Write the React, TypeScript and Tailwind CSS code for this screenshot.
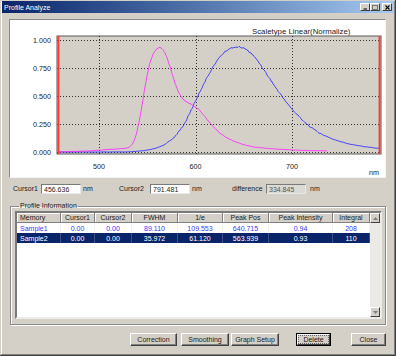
import React from 'react';

type Pt = [number, number];

// spectra, [nm, normalized value]
const pinkPts: Pt[] = [
  [457, 0.0], [490, 0.01], [510, 0.022], [525, 0.03], [532, 0.04], [537, 0.1], [542, 0.28],
  [547, 0.55], [552, 0.78], [557, 0.9], [562, 0.935], [566, 0.925], [570, 0.86], [575, 0.72],
  [580, 0.58], [585, 0.49], [590, 0.45], [595, 0.43], [600, 0.4], [605, 0.37], [611, 0.3],
  [618, 0.23], [625, 0.17], [632, 0.13], [640, 0.095], [650, 0.065], [660, 0.045], [680, 0.028],
  [700, 0.018], [720, 0.012], [737, 0.01],
];

const bluePts: Pt[] = [
  [457, 0.0], [530, 0.0], [545, 0.01], [558, 0.03], [568, 0.065], [578, 0.13], [588, 0.24],
  [598, 0.42], [608, 0.6], [618, 0.76], [626, 0.86], [634, 0.92], [642, 0.94], [650, 0.93],
  [658, 0.88], [665, 0.81], [675, 0.68], [685, 0.55], [700, 0.38], [715, 0.25], [730, 0.16],
  [745, 0.105], [760, 0.07], [775, 0.048], [791, 0.032],
];

const xOf = (nm: number) => 99 + (nm - 500) * 0.965;
const yOf = (v: number) => 152 - 112 * v;

function curvePath(pts: Pt[], noise: number, seed: number) {
  const x0 = Math.ceil(xOf(pts[0][0]));
  const x1 = Math.floor(xOf(pts[pts.length - 1][0]));
  const vals: number[] = [];
  for (let x = x0; x <= x1; x++) {
    const nm = 500 + (x - 99) / 0.965;
    let k = 0;
    while (k < pts.length - 2 && pts[k + 1][0] < nm) k++;
    const [a, va] = pts[k];
    const [b, vb] = pts[k + 1];
    const t = Math.min(1, Math.max(0, (nm - a) / (b - a)));
    vals.push(va + (vb - va) * t);
  }
  const sm = vals.map((_, i) => {
    let s = 0, n = 0;
    for (let j = i - 2; j <= i + 2; j++) {
      if (j >= 0 && j < vals.length) { s += vals[j]; n++; }
    }
    return s / n;
  });
  return sm
    .map((v, i) => {
      const r = Math.sin((i + seed) * 12.9898) * 43758.5453;
      const f = r - Math.floor(r) - 0.5;
      const y = yOf(v) + f * noise * Math.min(1, v * 3 + 0.2);
      return `${i === 0 ? 'M' : 'L'}${x0 + i},${y.toFixed(2)}`;
    })
    .join(' ');
}

const yTicks = [
  { v: 1, label: '1.000' },
  { v: 0.75, label: '0.750' },
  { v: 0.5, label: '0.500' },
  { v: 0.25, label: '0.250' },
  { v: 0, label: '0.000' },
];

const xTicks = [500, 600, 700];

function Chart() {
  const left = 57;
  const right = 381;
  const top = 36;
  const bottom = 154;
  return (
    <svg width={375} height={157} className="block">
      <g transform="translate(-10,-20)" fontFamily="'Liberation Sans', Arial, sans-serif" fontSize="7.2">
        <text x={252} y={34} fontSize="7.8" fill="#222">Scaletype Linear(Normalize)</text>
        <rect x={left} y={top} width={right - left} height={bottom - top} fill="#d4d0c8" stroke="#5a5a5a" strokeWidth={1} />
        {yTicks.map(t => (
          <g key={t.label}>
            <line x1={left} x2={right} y1={yOf(t.v) + 0.5} y2={yOf(t.v) + 0.5} stroke="#333" strokeWidth={1} strokeDasharray="1 2" />
            <text x={51} y={yOf(t.v) + 3} textAnchor="end" fill="#222">{t.label}</text>
          </g>
        ))}
        {xTicks.map(t => (
          <g key={t}>
            <line x1={Math.round(xOf(t)) + 0.5} x2={Math.round(xOf(t)) + 0.5} y1={top} y2={bottom} stroke="#333" strokeWidth={1} strokeDasharray="1 2" />
            <text x={xOf(t)} y={169} textAnchor="middle" fill="#222">{t}</text>
          </g>
        ))}
        <text x={369} y={175} fill="#222">nm</text>
        <path d={curvePath(bluePts, 1.4, 3)} fill="none" stroke="#3030ff" strokeWidth={0.85} />
        <path d={curvePath(pinkPts, 0.9, 11)} fill="none" stroke="#ff2aff" strokeWidth={0.85} />
        <line x1={58.5} x2={58.5} y1={top} y2={bottom} stroke="#ff3b30" strokeWidth={1.8} />
        <line x1={379.5} x2={379.5} y1={top} y2={bottom} stroke="#ff3b30" strokeWidth={1.8} />
      </g>
    </svg>
  );
}

const columns = [
  { label: 'Memory', w: 'w-[44px]' },
  { label: 'Cursor1', w: 'w-[34px]' },
  { label: 'Cursor2', w: 'w-[37px]' },
  { label: 'FWHM', w: 'w-[46px]' },
  { label: '1/e', w: 'w-[45px]' },
  { label: 'Peak Pos', w: 'w-[46px]' },
  { label: 'Peak Intensity', w: 'w-[64px]' },
  { label: 'Integral', w: 'w-[37px]' },
];

const rows = [
  { memory: 'Sample1', values: ['0.00', '0.00', '89.110', '109.553', '640.715', '0.94', '208'], selected: false },
  { memory: 'Sample2', values: ['0.00', '0.00', '35.972', '61.120', '563.939', '0.93', '110'], selected: true },
];

function WinButton({ label, isDefault, className }: { label: string; isDefault?: boolean; className: string }) {
  if (isDefault) {
    return (
      <div className={`${className} h-[13px] border border-black`}>
        <div className="h-full border border-t-white border-l-white border-b-[#404040] border-r-[#404040] bg-[#d4d0c8] flex items-center justify-center">
          <div className="w-[29px] h-[7px] outline outline-1 outline-dotted outline-[#666] flex items-center justify-center leading-none">{label}</div>
        </div>
      </div>
    );
  }
  return (
    <div className={`${className} h-[13px] border border-t-white border-l-white border-b-[#404040] border-r-[#404040] bg-[#d4d0c8] shadow-[inset_-1px_-1px_#808080] flex items-center justify-center leading-none`}>
      {label}
    </div>
  );
}

function TitleButton({ children, className = '' }: { children: React.ReactNode; className?: string }) {
  return (
    <div className={`w-[10px] h-[8px] bg-[#d4d0c8] border border-t-white border-l-white border-b-[#404040] border-r-[#404040] flex items-center justify-center ${className}`}>
      {children}
    </div>
  );
}

function TextBox({ value, disabled, className }: { value: string; disabled?: boolean; className: string }) {
  return (
    <div className={`${className} h-[10px] border border-t-[#7a7a7a] border-l-[#7a7a7a] border-b-[#e8e8e8] border-r-[#e8e8e8] ${disabled ? 'bg-[#dcdad5] text-[#555]' : 'bg-white text-[#222]'} flex items-center pl-[2px] leading-none`}>
      {value}
    </div>
  );
}

export default function App() {
  return (
    <div className="w-[396px] h-[356px] bg-[#d4d0c8] font-['Liberation_Sans',Arial,sans-serif] text-[7px] text-[#1a1a1a] overflow-hidden shadow-[inset_-1px_-1px_#404040,inset_1px_1px_#d4d0c8,inset_-2px_-2px_#808080,inset_2px_2px_#ffffff] pt-[1px] px-[2px] flex flex-col">
      {/* title bar */}
      <div className="h-[12px] bg-gradient-to-r from-[#0a246a] to-[#a6caf0] flex items-center pl-[2px] pr-[2px]">
        <span className="text-white text-[7px] leading-none">Profile Analyze</span>
        <div className="ml-auto flex items-center">
          <TitleButton>
            <svg width="5" height="5" viewBox="0 0 5 5"><rect x="0.5" y="3.5" width="3.5" height="1" fill="#000" /></svg>
          </TitleButton>
          <TitleButton>
            <svg width="6" height="5" viewBox="0 0 6 5"><rect x="0.5" y="0.5" width="5" height="4" fill="none" stroke="#777" strokeWidth="1" /></svg>
          </TitleButton>
          <TitleButton className="ml-[2px]">
            <svg width="5" height="5" viewBox="0 0 5 5"><path d="M0.5 0.5 L4.5 4.5 M4.5 0.5 L0.5 4.5" stroke="#000" strokeWidth="1.1" /></svg>
          </TitleButton>
        </div>
      </div>

      {/* chart panel */}
      <div className="ml-[7px] mt-[6px] w-[377px] h-[159px] bg-white border border-t-[#8a8a8a] border-l-[#8a8a8a] border-b-[#f4f4f4] border-r-[#f4f4f4]">
        <Chart />
      </div>

      {/* cursor row */}
      <div className="mt-[6px] h-[10px] flex items-center">
        <span className="ml-[11px] w-[28px]">Cursor1</span>
        <TextBox value="456.636" className="w-[40px]" />
        <span className="ml-[2px] w-[36px]">nm</span>
        <span className="w-[31px]">Cursor2</span>
        <TextBox value="791.481" className="w-[40px]" />
        <span className="ml-[2px] w-[40px]">nm</span>
        <span className="w-[34px]">difference</span>
        <TextBox value="334.845" disabled className="w-[40px]" />
        <span className="ml-[4px]">nm</span>
      </div>

      {/* profile information */}
      <fieldset className="mt-[8px] ml-[8px] w-[376px] h-[123px] border border-[#8a8a8a] shadow-[inset_1px_1px_#ffffff,1px_1px_#ffffff] pl-[4px] pr-[2px] pb-[3px] pt-[1px]">
        <legend className="ml-[4px] px-[1px] leading-[8px]">Profile Information</legend>
        <div className="w-[367px] h-[108px] border-[2px] border-t-[#7a7a7a] border-l-[#7a7a7a] border-b-[#ececec] border-r-[#ececec] bg-white flex">
          <div className="flex-1 flex flex-col">
            <div className="flex h-[10px]">
              {columns.map(c => (
                <div key={c.label} className={`${c.w} h-[10px] bg-[#d4d0c8] border-r border-b border-r-[#808080] border-b-[#808080] shadow-[inset_1px_1px_#ffffff] flex items-center ${c.label === 'Memory' ? 'justify-start pl-[3px]' : 'justify-center'} leading-none`}>
                  {c.label}
                </div>
              ))}
            </div>
            {rows.map(r => (
              <div key={r.memory} className={`flex h-[10px] ${r.selected ? 'bg-[#0a246a] text-white' : 'bg-white text-[#3a3aff]'}`}>
                <div className={`${columns[0].w} flex items-center pl-[3px] leading-none border-r ${r.selected ? 'border-[#3a4f8a]' : 'border-[#f0f0f0]'}`}>{r.memory}</div>
                {r.values.map((v, i) => (
                  <div key={i} className={`${columns[i + 1].w} flex items-center justify-center leading-none border-r ${r.selected ? 'border-[#3a4f8a]' : 'border-[#f0f0f0]'}`}>{v}</div>
                ))}
              </div>
            ))}
          </div>
          {/* scrollbar */}
          <div className="w-[10px] bg-[#eceae6] flex flex-col justify-between">
            <div className="h-[10px] bg-[#d4d0c8] border border-t-white border-l-white border-b-[#404040] border-r-[#404040] flex items-center justify-center">
              <svg width="5" height="3" viewBox="0 0 5 3"><path d="M2.5 0 L5 3 L0 3 Z" fill="#808080" /></svg>
            </div>
            <div className="h-[10px] bg-[#d4d0c8] border border-t-white border-l-white border-b-[#404040] border-r-[#404040] flex items-center justify-center">
              <svg width="5" height="3" viewBox="0 0 5 3"><path d="M0 0 L5 0 L2.5 3 Z" fill="#808080" /></svg>
            </div>
          </div>
        </div>
      </fieldset>

      {/* buttons */}
      <div className="mt-[8px] flex items-center">
        <WinButton label="Correction" className="ml-[128px] w-[47px]" />
        <WinButton label="Smoothing" className="ml-[4px] w-[48px]" />
        <WinButton label="Graph Setup" className="ml-[2px] w-[48px]" />
        <WinButton label="Delete" isDefault className="ml-[17px] w-[35px]" />
        <WinButton label="Close" className="ml-[20px] w-[35px]" />
      </div>
    </div>
  );
}
